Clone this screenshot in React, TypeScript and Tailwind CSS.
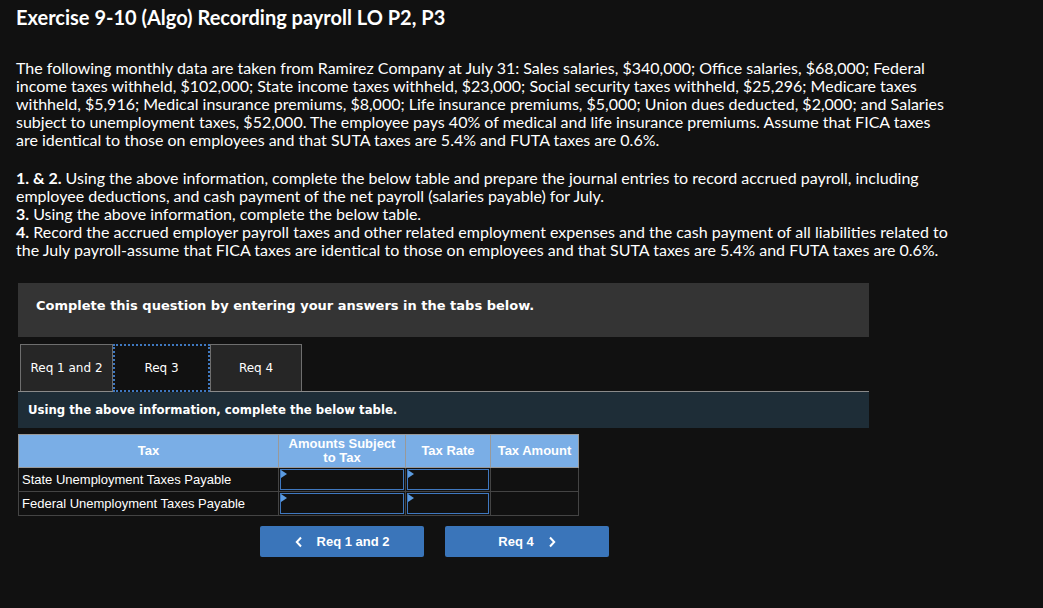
import React from "react";

const body = { fontFamily: "Lato, 'Open Sans', sans-serif" };
const verd = { fontFamily: "'DejaVu Sans', Verdana, sans-serif" };
const verdCond = { fontFamily: "'DejaVu Sans Condensed', 'DejaVu Sans', Verdana, sans-serif", fontStretch: "condensed" as const };
const arial = { fontFamily: "'Liberation Sans', Arial, sans-serif" };

function InputCell() {
  return (
    <td className="border border-[#444] p-[1px]">
      <div className="relative h-[21px] border border-[#3f78c0] bg-[#111]">
        <div className="absolute left-0 top-0 w-0 h-0 border-t-[4px] border-b-[4px] border-l-[6px] border-t-transparent border-b-transparent border-l-[#5b9be0]" />
      </div>
    </td>
  );
}

export default function App() {
  return (
    <div className="w-[1043px] h-[608px] bg-[#111111] text-white overflow-hidden pl-[16px]">
      <h1 className="pt-[5px] text-[20px] leading-[24px] font-bold" style={body}>
        Exercise 9-10 (Algo) Recording payroll LO P2, P3
      </h1>
      <p className="mt-[30px] text-[16px] leading-[18px]" style={body}>
        The following monthly data are taken from Ramirez Company at July 31: Sales salaries, $340,000; Office salaries, $68,000; Federal
        <br />
        income taxes withheld, $102,000; State income taxes withheld, $23,000; Social security taxes withheld, $25,296; Medicare taxes
        <br />
        withheld, $5,916; Medical insurance premiums, $8,000; Life insurance premiums, $5,000; Union dues deducted, $2,000; and Salaries
        <br />
        subject to unemployment taxes, $52,000. The employee pays 40% of medical and life insurance premiums. Assume that FICA taxes
        <br />
        are identical to those on employees and that SUTA taxes are 5.4% and FUTA taxes are 0.6%.
      </p>
      <p className="mt-[20px] text-[16px] leading-[18px]" style={body}>
        <b>1. &amp; 2.</b> Using the above information, complete the below table and prepare the journal entries to record accrued payroll, including
        <br />
        employee deductions, and cash payment of the net payroll (salaries payable) for July.
        <br />
        <b>3.</b> Using the above information, complete the below table.
        <br />
        <b>4.</b> Record the accrued employer payroll taxes and other related employment expenses and the cash payment of all liabilities related to
        <br />
        the July payroll-assume that FICA taxes are identical to those on employees and that SUTA taxes are 5.4% and FUTA taxes are 0.6%.
      </p>

      <div className="ml-[2px] mt-[24px] w-[851px]">
        <div className="h-[54px] bg-[#343434] flex items-center pl-[18px] pb-[8px]">
          <span className="text-[13px] font-bold" style={verd}>
            Complete this question by entering your answers in the tabs below.
          </span>
        </div>

        <div className="mt-[7px] flex items-end border-b border-[#8a8a8a] pl-[2px]" style={verd}>
          <div className="w-[93px] h-[47px] bg-[#262626] border border-[#6e6e6e] border-b-0 flex items-center justify-center text-[12px]">
            Req 1 and 2
          </div>
          <div className="w-[97px] h-[48px] bg-[#111] border-2 border-dotted border-[#3f78c0] -mb-[1px] flex items-center justify-center text-[12px]">
            Req 3
          </div>
          <div className="w-[92px] h-[47px] bg-[#262626] border border-[#6e6e6e] border-b-0 flex items-center justify-center text-[12px]">
            Req 4
          </div>
        </div>

        <div className="h-[36px] bg-[#1e2d37] flex items-center pl-[10px]">
          <span className="text-[13px] font-bold" style={verdCond}>
            Using the above information, complete the below table.
          </span>
        </div>

        <table className="mt-[6px] border-collapse text-[13px]" style={arial}>
          <thead>
            <tr className="bg-[#7aaee6] text-white h-[33px]">
              <th className="w-[260px] border border-[#999] font-bold leading-[14px]">Tax</th>
              <th className="w-[127px] border border-[#999] font-bold leading-[14px]">
                Amounts Subject
                <br />
                to Tax
              </th>
              <th className="w-[85px] border border-[#999] font-bold leading-[14px]">Tax Rate</th>
              <th className="w-[88px] border border-[#999] font-bold leading-[14px]">Tax Amount</th>
            </tr>
          </thead>
          <tbody>
            <tr>
              <td className="border border-[#444] pl-[3px] text-left">State Unemployment Taxes Payable</td>
              <InputCell />
              <InputCell />
              <td className="border border-[#444]" />
            </tr>
            <tr>
              <td className="border border-[#444] pl-[3px] text-left">Federal Unemployment Taxes Payable</td>
              <InputCell />
              <InputCell />
              <td className="border border-[#444]" />
            </tr>
          </tbody>
        </table>

        <div className="mt-[10px] ml-[242px] flex gap-[21px]" style={arial}>
          <div className="w-[164px] h-[31px] bg-[#3a75ba] rounded-[2px] flex items-center justify-center gap-[14px] text-[13px] font-bold">
            <svg width="8" height="12" viewBox="0 0 8 12">
              <path d="M6 1.5 L1.8 6 L6 10.5" stroke="white" strokeWidth="2" fill="none" />
            </svg>
            <span>Req 1 and 2</span>
          </div>
          <div className="w-[164px] h-[31px] bg-[#3a75ba] rounded-[2px] flex items-center justify-center gap-[14px] text-[13px] font-bold">
            <span>Req 4</span>
            <svg width="8" height="12" viewBox="0 0 8 12">
              <path d="M2 1.5 L6.2 6 L2 10.5" stroke="white" strokeWidth="2" fill="none" />
            </svg>
          </div>
        </div>
      </div>
    </div>
  );
}
